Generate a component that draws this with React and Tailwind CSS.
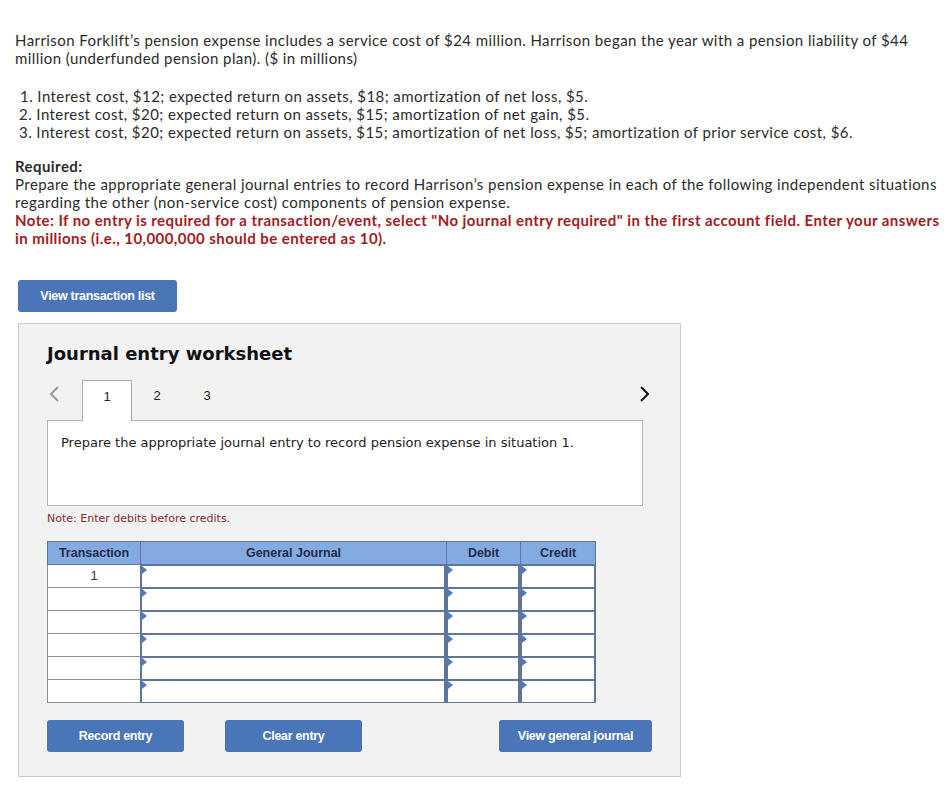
import React from "react";

const body = { fontFamily: "Lato, 'Open Sans', sans-serif" };
const verdana = { fontFamily: "'DejaVu Sans', Verdana, sans-serif" };
const narrow = { fontFamily: "'Liberation Sans Narrow', 'Arial Narrow', 'Liberation Sans', Arial, sans-serif" };
const arial = { fontFamily: "'Liberation Sans', Arial, sans-serif" };

function Btn({ children, w }) {
  return (
    <button
      className={`h-[32px] ${w} rounded-[3px] bg-[#4a76b8] text-white text-[12.5px] font-bold tracking-[-0.3px]`}
      style={narrow}
    >
      {children}
    </button>
  );
}

function Flag() {
  return (
    <span className="absolute top-0 left-0 w-0 h-0 border-y-[4px] border-y-transparent border-l-[5px] border-l-[#4d7cc4]" />
  );
}

function InputCell({ w }) {
  return (
    <div className={`relative ${w} h-full bg-white border-x-2 border-y-[1.5px] border-[#5f7599]`}>
      <Flag />
    </div>
  );
}

export default function App() {
  const rows = [1, 2, 3, 4, 5, 6];
  return (
    <div className="w-[949px] min-h-[786px] bg-white overflow-hidden text-[#2b2b2b]">
      <div className="pt-[31px] pl-[15px] w-[1000px] tracking-[0.43px]" style={body}>
        <div className="text-[15px] leading-[18px]">
          <div className="whitespace-nowrap">
            Harrison Forklift’s pension expense includes a service cost of $24 million. Harrison began the year with a pension liability of $44
          </div>
          <div className="whitespace-nowrap">million (underfunded pension plan). ($ in millions)</div>
        </div>

        <div className="mt-[20px] pl-[5px] text-[15px] leading-[18px]">
          <div className="whitespace-nowrap">1. Interest cost, $12; expected return on assets, $18; amortization of net loss, $5.</div>
          <div className="whitespace-nowrap -ml-[1px]">2. Interest cost, $20; expected return on assets, $15; amortization of net gain, $5.</div>
          <div className="whitespace-nowrap -ml-[1px]">3. Interest cost, $20; expected return on assets, $15; amortization of net loss, $5; amortization of prior service cost, $6.</div>
        </div>

        <div className="mt-[16px] text-[15px] leading-[18px]">
          <div className="font-bold">Required:</div>
          <div className="whitespace-nowrap">
            Prepare the appropriate general journal entries to record Harrison’s pension expense in each of the following independent situations
          </div>
          <div className="whitespace-nowrap">regarding the other (non-service cost) components of pension expense.</div>
          <div className="whitespace-nowrap font-bold text-[#a31b1e]">
            Note: If no entry is required for a transaction/event, select "No journal entry required" in the first account field. Enter your answers
          </div>
          <div className="whitespace-nowrap font-bold text-[#a31b1e]">in millions (i.e., 10,000,000 should be entered as 10).</div>
        </div>
      </div>

      <div className="pl-[18px]">
        <div className="mt-[33px]">
          <Btn w="w-[159px] h-[31px]">View transaction list</Btn>
        </div>

        <div className="mt-[11px] w-[663px] bg-[#f2f2f2] border border-[#cbcbcb] pt-[18px] pb-[24px] pl-[28px]" style={verdana}>
          <h2 className="text-[18px] leading-[24px] font-bold text-[#111]">Journal entry worksheet</h2>

          <div className="mt-[14px] flex items-end w-[605px] h-[40px]">
            <div className="w-[35px] h-full pt-[6px] pl-[2px]">
              <svg width="11" height="16" viewBox="0 0 11 16">
                <path d="M9 1 L2 8 L9 15" fill="none" stroke="#9a9a9a" strokeWidth="2" />
              </svg>
            </div>
            <div className="relative z-10 -mb-px w-[50px] h-[41px] bg-white border border-b-0 border-[#aaa] flex justify-center pt-[6px] text-[13px] text-[#222]" style={arial}>
              1
            </div>
            <div className="w-[50px] h-full flex justify-center pt-[6px] text-[13px] text-[#222]" style={arial}>2</div>
            <div className="w-[50px] h-full flex justify-center pt-[6px] text-[13px] text-[#222]" style={arial}>3</div>
            <div className="ml-auto h-full pt-[6px] pr-[2px]">
              <svg width="11" height="16" viewBox="0 0 11 16">
                <path d="M2 1 L9 8 L2 15" fill="none" stroke="#111" strokeWidth="2" />
              </svg>
            </div>
          </div>

          <div className="w-[596px] h-[86px] bg-white border border-[#b5b5b5] pt-[15px] pl-[13px] text-[13px] leading-[14px] text-[#222]">
            Prepare the appropriate journal entry to record pension expense in situation 1.
          </div>

          <div className="mt-[6px] text-[11px] leading-[14px] text-[#8a2a2a]">Note: Enter debits before credits.</div>

          <div className="mt-[15px] w-[549px]" style={arial}>
            <div className="flex h-[24px] bg-[#84abe1] border border-[#5f7599] text-[12.5px] font-bold text-[#1f2d47]">
              <div className="w-[93px] flex items-center justify-center border-r border-[#5f7599]">Transaction</div>
              <div className="w-[306px] flex items-center justify-center border-r border-[#5f7599]">General Journal</div>
              <div className="w-[74px] flex items-center justify-center border-r border-[#5f7599]">Debit</div>
              <div className="flex-1 flex items-center justify-center">Credit</div>
            </div>
            {rows.map((r) => (
              <div key={r} className="flex h-[23px]">
                <div className="w-[93px] h-full bg-white border-l border-b border-[#8f8f8f] flex items-center justify-center text-[13px] text-[#333]">
                  {r === 1 ? "1" : ""}
                </div>
                <InputCell w="w-[306px]" />
                <InputCell w="w-[74px]" />
                <InputCell w="w-[76px]" />
              </div>
            ))}
          </div>

          <div className="mt-[17px] w-[605px] flex">
            <Btn w="w-[137px]">Record entry</Btn>
            <div className="ml-[41px]">
              <Btn w="w-[137px]">Clear entry</Btn>
            </div>
            <div className="ml-auto">
              <Btn w="w-[153px]">View general journal</Btn>
            </div>
          </div>
        </div>
      </div>
    </div>
  );
}
